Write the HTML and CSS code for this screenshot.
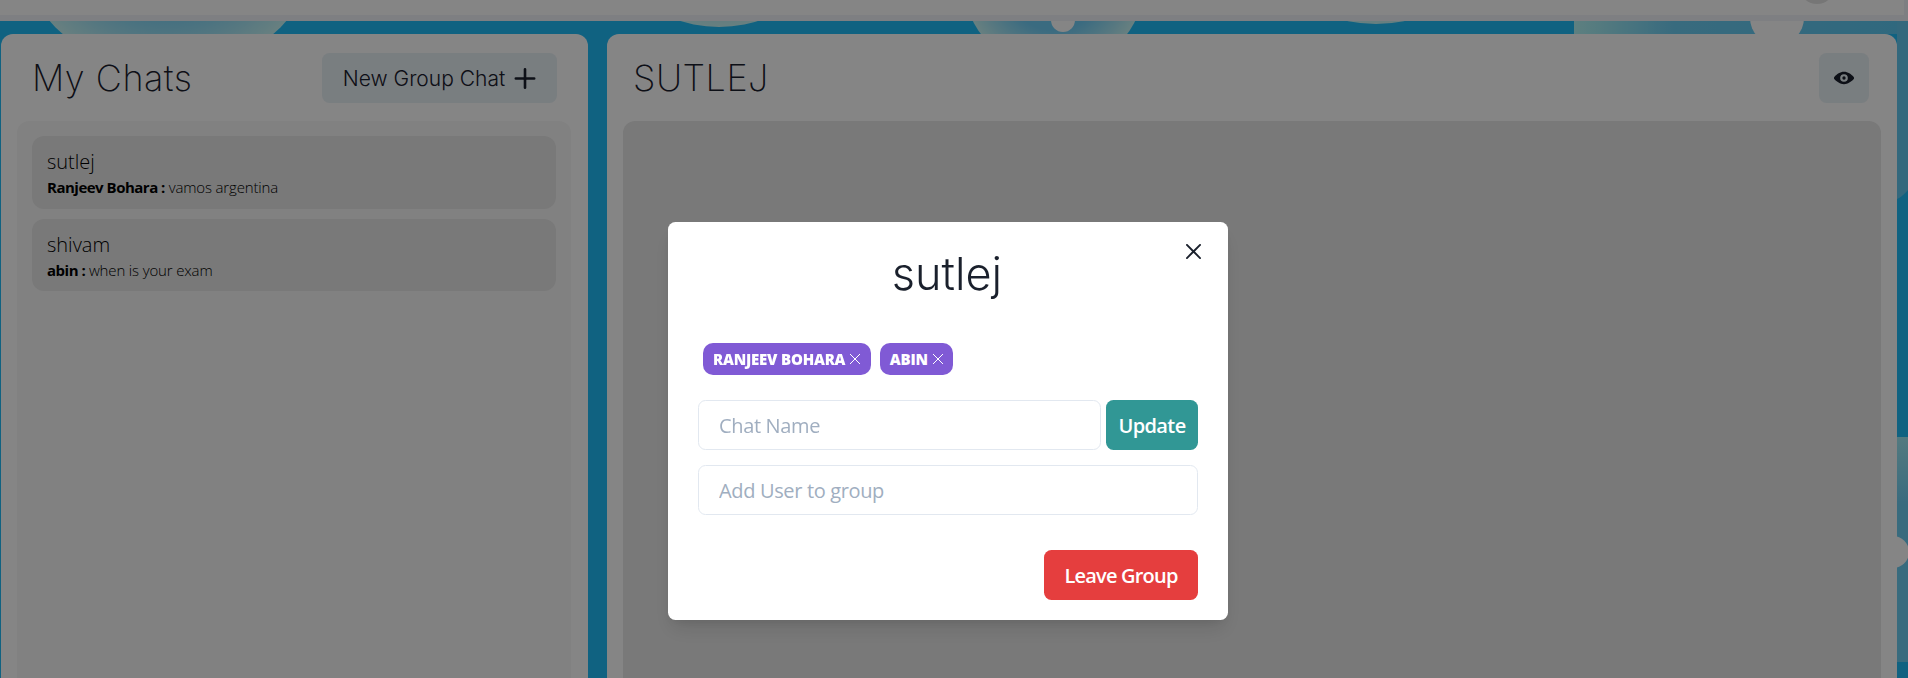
FILE: index.html
```html
<!DOCTYPE html>
<html lang="en">
<head>
<meta charset="utf-8">
<title>Chats</title>
<link rel="stylesheet" href="styles.css">
</head>
<body>
<div class="app">
  <svg class="backdrop" width="1908" height="678" viewBox="0 0 1908 678" aria-hidden="true">
    <defs>
      <radialGradient id="bubble">
        <stop offset="0.55" stop-color="#70cdf5"/>
        <stop offset="1" stop-color="#c8f5f5"/>
      </radialGradient>
      <linearGradient id="sheetTop" x1="0" x2="1" y1="0" y2="0">
        <stop offset="0" stop-color="#b4f5f5"/>
        <stop offset="0.3" stop-color="#6ccdf2"/>
        <stop offset="1" stop-color="#5cc8f2"/>
      </linearGradient>
      <linearGradient id="sheetSide" x1="0" x2="0" y1="0" y2="1">
        <stop offset="0" stop-color="#a0eaf5"/>
        <stop offset="0.3" stop-color="#6ccdf2"/>
        <stop offset="1" stop-color="#6ccdf2"/>
      </linearGradient>
    </defs>
    <circle cx="168" cy="-85" r="159" fill="url(#bubble)"/>
    <circle cx="719" cy="-103" r="130" fill="url(#bubble)"/>
    <circle cx="1054" cy="-20" r="91" fill="url(#bubble)"/>
    <circle cx="1063" cy="20" r="12" fill="#fff"/>
    <circle cx="1376" cy="-118" r="142" fill="url(#bubble)"/>
    <rect x="1574" y="21" width="334" height="13" fill="url(#sheetTop)"/>
    <circle cx="1777" cy="18" r="27" fill="#fff"/>
    <path class="sheet" d="M1897 21H1908V190Q1902 197 1897 199Z"/>
    <rect x="1897" y="437" width="11" height="225" fill="url(#sheetSide)"/>
    <circle cx="1893" cy="552" r="16" fill="#fff"/>
  </svg>

  <header class="topbar">
    <span class="avatar"></span>
  </header>

  <main class="workspace">
    <section class="panel panel-chats">
      <div class="panel-head panel-head-chats">
        <h2 class="panel-title">My Chats</h2>
        <button class="btn btn-new" type="button">New Group Chat
          <svg class="icon-add" viewBox="0 0 24 24" aria-hidden="true"><path fill="currentColor" d="M0,12a1.5,1.5,0,0,0,1.5,1.5h8.75a.25.25,0,0,1,.25.25V22.5a1.5,1.5,0,0,0,3,0V13.75a.25.25,0,0,1,.25-.25H22.5a1.5,1.5,0,0,0,0-3H13.75a.25.25,0,0,1-.25-.25V1.5a1.5,1.5,0,0,0-3,0v8.75a.25.25,0,0,1-.25.25H1.5A1.5,1.5,0,0,0,0,12Z"/></svg>
        </button>
      </div>
      <div class="chat-list">
        <div class="chat-item">
          <p class="chat-name">sutlej</p>
          <p class="chat-last"><b>Ranjeev Bohara :</b> vamos argentina</p>
        </div>
        <div class="chat-item">
          <p class="chat-name">shivam</p>
          <p class="chat-last"><b>abin :</b> when is your exam</p>
        </div>
      </div>
    </section>

    <section class="panel panel-room">
      <div class="panel-head panel-head-room">
        <h2 class="panel-title">SUTLEJ</h2>
        <button class="btn btn-eye" type="button" aria-label="View">
          <svg class="icon-eye" viewBox="0 0 24 24" aria-hidden="true"><path fill="currentColor" d="M23.432,10.524C20.787,7.614,16.4,4.538,12,4.6,7.6,4.537,3.213,7.613.568,10.524a2.211,2.211,0,0,0,0,2.948C3.182,16.351,7.507,19.4,11.839,19.4h.308c4.347,0,8.671-3.049,11.288-5.929A2.21,2.21,0,0,0,23.432,10.524ZM7.4,12A4.6,4.6,0,1,1,12,16.6,4.6,4.6,0,0,1,7.4,12Z"/><circle fill="currentColor" cx="12" cy="12" r="2"/></svg>
        </button>
      </div>
      <div class="room-body"></div>
    </section>
  </main>
</div>

<div class="overlay"></div>

<div class="modal" role="dialog" aria-modal="true">
  <button class="modal-close" type="button" aria-label="Close">
    <svg class="icon-close" viewBox="0 0 24 24" aria-hidden="true"><path fill="currentColor" d="M.439,21.44a1.5,1.5,0,0,0,2.122,2.121L11.823,14.3a.25.25,0,0,1,.354,0l9.262,9.263a1.5,1.5,0,1,0,2.122-2.121L14.3,12.177a.25.25,0,0,1,0-.354l9.263-9.262A1.5,1.5,0,0,0,21.439.44L12.177,9.7a.25.25,0,0,1-.354,0L2.561.44A1.5,1.5,0,0,0,.439,2.561L9.7,11.823a.25.25,0,0,1,0,.354Z"/></svg>
  </button>
  <h3 class="modal-title">sutlej</h3>
  <div class="chips">
    <span class="chip">Ranjeev Bohara
      <svg class="icon-chip-x" viewBox="0 0 12 12" aria-hidden="true"><path d="M1 1L11 11M11 1L1 11"/></svg>
    </span>
    <span class="chip">Abin
      <svg class="icon-chip-x" viewBox="0 0 12 12" aria-hidden="true"><path d="M1 1L11 11M11 1L1 11"/></svg>
    </span>
  </div>
  <div class="form-row">
    <input class="field" type="text" placeholder="Chat Name">
    <button class="btn btn-update" type="button">Update</button>
  </div>
  <div class="form-row form-row-user">
    <input class="field" type="text" placeholder="Add User to group">
  </div>
  <div class="modal-foot">
    <button class="btn btn-leave" type="button">Leave Group</button>
  </div>
</div>
</body>
</html>
```
FILE: styles.css
```css
* { box-sizing: border-box; }

html, body {
  margin: 0;
  height: 100%;
  overflow: hidden;
}

body {
  font-family: "Open Sans", "Noto Sans", sans-serif;
  color: #1a202c;
}

.app {
  position: relative;
  display: flex;
  flex-direction: column;
  height: 678px;
  overflow: hidden;
  background: #20bcf8;
}

.backdrop {
  position: absolute;
  left: 0;
  top: 0;
}

.sheet { fill: #62c8f0; }

.topbar {
  position: relative;
  display: flex;
  justify-content: flex-end;
  align-items: flex-end;
  flex: none;
  height: 21px;
  padding: 0 69px 11px 0;
  overflow: hidden;
  background: #fff;
  border-bottom: 6px solid #f1f4f9;
  border-right: 4px solid #f1f4f9;
}

.avatar {
  flex: none;
  width: 36px;
  height: 36px;
  border-radius: 50%;
  background: #e3e3e3;
}

.workspace {
  position: relative;
  display: flex;
  flex: 1;
  gap: 19px;
  min-height: 0;
  padding: 13px 11px 0 1px;
}

.panel {
  display: flex;
  flex-direction: column;
  height: 700px;
  background: #fff;
  border-radius: 12px;
}

.panel-chats { flex: none; width: 587px; }
.panel-room { flex: 1; min-width: 0; }

.panel-head {
  display: flex;
  align-items: center;
  justify-content: space-between;
  height: 50px;
  margin-top: 19px;
  margin-bottom: 18px;
}

.panel-head-chats { padding: 0 31px 0 31px; }
.panel-head-room { padding: 0 28px 0 26px; }

.panel-title {
  margin: 0;
  font-family: "Inter", sans-serif;
  font-weight: 200;
  font-size: 36px;
  line-height: 50px;
  letter-spacing: 0.5px;
}

.btn {
  display: inline-flex;
  align-items: center;
  justify-content: center;
  height: 50px;
  border: 0;
  border-radius: 7.5px;
  font-family: "Open Sans", sans-serif;
  color: inherit;
}

.btn-new {
  width: 235px;
  gap: 9px;
  background: #e9f1f6;
  font-family: "Inter", sans-serif;
  font-size: 21px;
  font-weight: 300;
}

.icon-add { width: 22px; height: 21px; }

.btn-eye {
  width: 50px;
  background: #e9f1f6;
}

.icon-eye { width: 20px; height: 20px; }

.chat-list {
  display: flex;
  flex-direction: column;
  gap: 10px;
  flex: 1;
  margin: 0 17px 0 16px;
  padding: 15px;
  background: #f8f8f8;
  border-radius: 12px;
}

.chat-item {
  display: flex;
  flex-direction: column;
  justify-content: center;
  height: 73px;
  padding: 0 15px 1px;
  background: #e8e8e8;
  border-radius: 12px;
  color: #000;
}

.chat-item + .chat-item { height: 72px; }

.chat-name {
  margin: 0;
  font-size: 20px;
  font-weight: 300;
  line-height: 30px;
}

.chat-last {
  margin: 0;
  font-size: 15px;
  font-weight: 300;
  line-height: 20px;
  letter-spacing: -0.15px;
}

.chat-last b {
  font-weight: 700;
  letter-spacing: -0.5px;
}

.room-body {
  flex: 1;
  margin: 0 16px;
  background: #e8e8e8;
  border-radius: 12px;
}

.overlay {
  position: fixed;
  inset: 0;
  background: rgba(0, 0, 0, 0.48);
}

.modal {
  position: fixed;
  left: 668px;
  top: 222px;
  display: flex;
  flex-direction: column;
  width: 560px;
  height: 398px;
  padding: 0 30px 20px;
  background: #fff;
  border-radius: 7.5px;
  box-shadow: 0 12px 20px -4px rgba(0, 0, 0, 0.12), 0 5px 8px -2px rgba(0, 0, 0, 0.06);
}

.modal-close {
  position: absolute;
  right: 27px;
  top: 21.5px;
  display: flex;
  width: 15px;
  height: 15px;
  padding: 0;
  border: 0;
  background: none;
  color: #1a202c;
}

.icon-close { width: 15px; height: 15px; }

.modal-title {
  margin: 0;
  height: 121px;
  padding: 22px 2px 0 0;
  font-family: "Inter", sans-serif;
  font-weight: 350;
  font-size: 45px;
  line-height: 60px;
  text-align: center;
}

.chips {
  display: flex;
  gap: 9px;
  height: 57px;
  padding-left: 5px;
}

.chip {
  display: inline-flex;
  align-items: center;
  gap: 4px;
  height: 32px;
  padding: 0 9.5px 0 10px;
  border-radius: 10px;
  background: #805ad5;
  color: #fff;
  font-size: 15px;
  font-weight: 800;
  letter-spacing: -0.2px;
  text-transform: uppercase;
}

.icon-chip-x {
  width: 12px;
  height: 12px;
  fill: none;
  stroke: #fff;
  stroke-width: 1;
}

.form-row {
  display: flex;
  gap: 5px;
  height: 50px;
}

.form-row-user { margin-top: 15px; }

.field {
  flex: 1;
  min-width: 0;
  height: 50px;
  padding: 0 20px;
  border: 1px solid #e2e8f0;
  border-radius: 7.5px;
  background: #fff;
  font-family: "Open Sans", sans-serif;
  font-size: 20px;
  letter-spacing: -0.35px;
  outline: none;
}

.field::placeholder { color: #a0aec0; opacity: 1; }

.btn-update {
  flex: none;
  width: 92px;
  background: #319795;
  color: #fff;
  font-size: 20px;
  font-weight: 600;
  letter-spacing: -0.6px;
}

.modal-foot {
  display: flex;
  justify-content: flex-end;
  margin-top: auto;
}

.btn-leave {
  width: 154px;
  background: #e53e3e;
  color: #fff;
  font-size: 20px;
  font-weight: 600;
  letter-spacing: -0.8px;
}
```
